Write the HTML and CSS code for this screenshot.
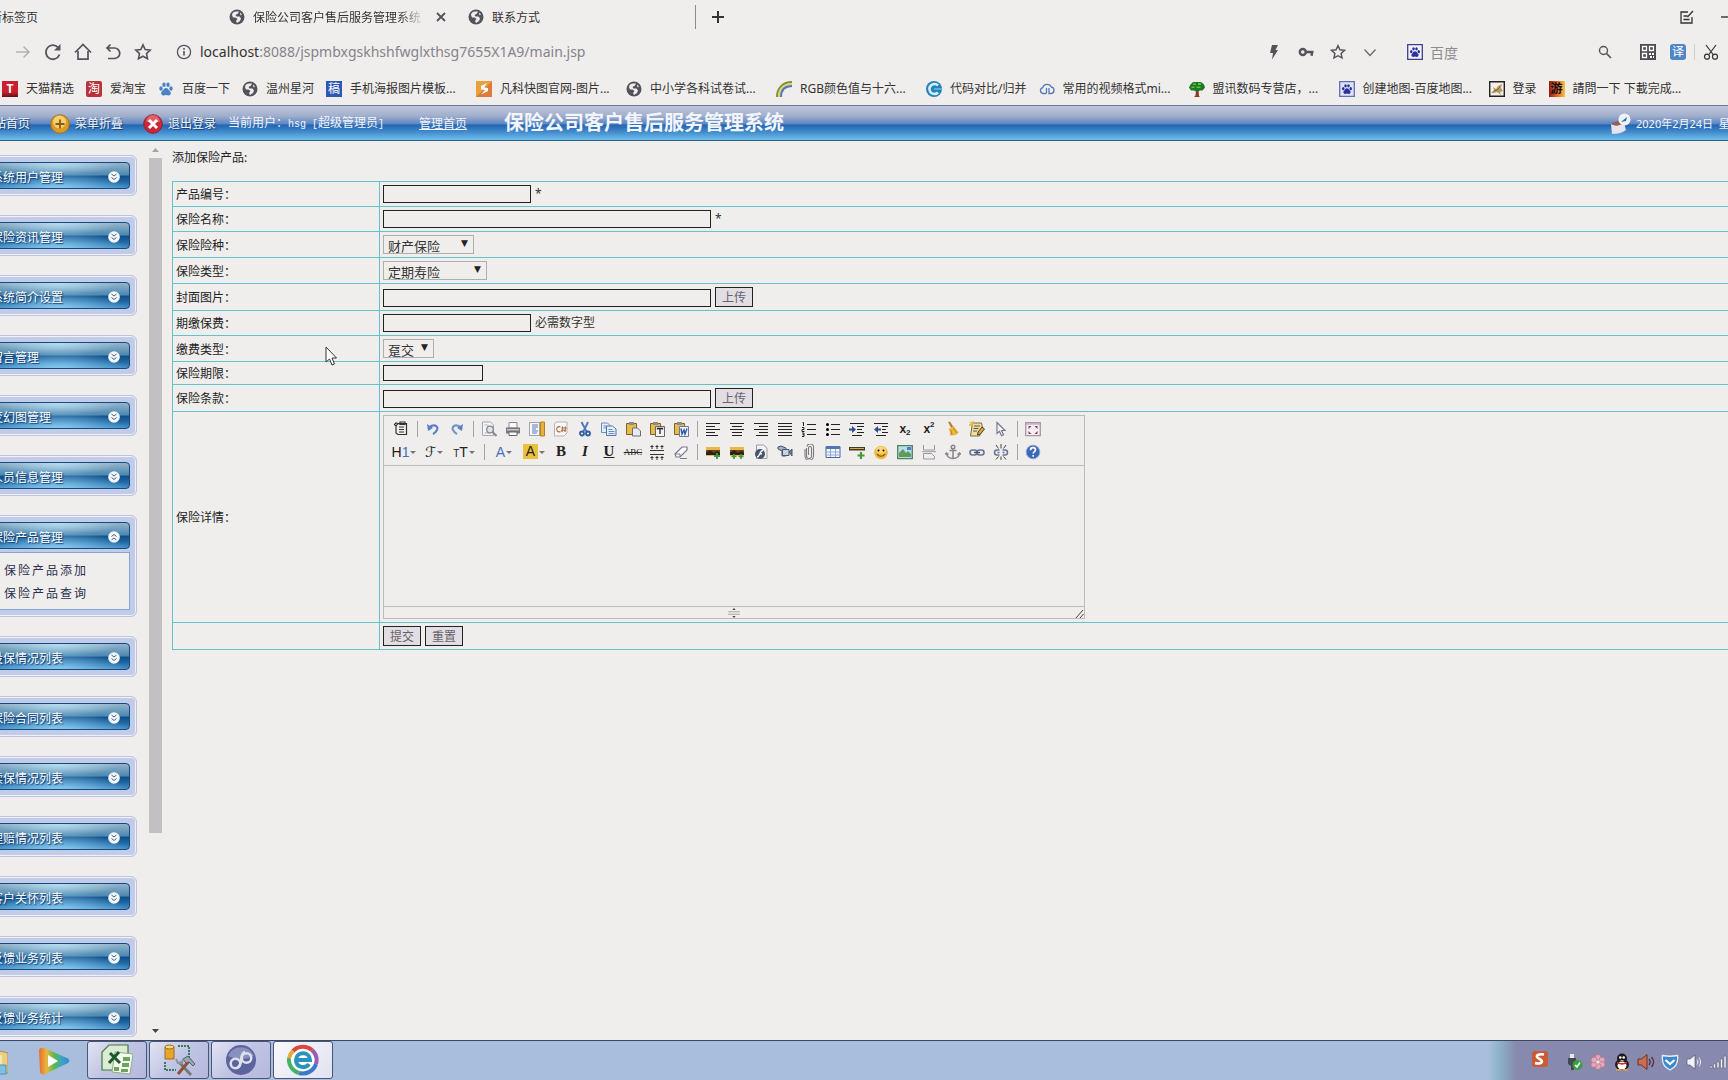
FILE: index.html
```html
<!DOCTYPE html>
<html lang="zh-CN">
  <head>
    <meta charset="UTF-8" />
    <meta name="viewport" content="width=device-width, initial-scale=1.0" />
    <title>保险公司客户售后服务管理系统</title>
    <link rel="stylesheet" href="styles.css">
  </head>
  <body>
    <!-- shared icons -->
    <svg class="defs" aria-hidden="true">
      <symbol id="globe" viewBox="0 0 16 16">
        <circle cx="8" cy="8" r="7.5" fill="#55525a" />
        <path d="M3 6c0-2 2-3.500 4-3.500h3L9 4.500 6.500 6l1 1.500h3l1.500 2-1 2.500-3 2-1-2 1.500-2-2-1.500H4z" fill="#efedee" />
        <path d="m11 3.500 2 2-1.500 1z" fill="#efedee" />
      </symbol>
      <symbol id="paw" viewBox="0 0 16 16">
        <ellipse cx="3" cy="7.500" rx="1.700" ry="2.200" />
        <ellipse cx="6" cy="3.800" rx="1.700" ry="2.300" />
        <ellipse cx="10" cy="3.800" rx="1.700" ry="2.300" />
        <ellipse cx="13" cy="7.500" rx="1.700" ry="2.200" />
        <path d="M8 7c2 0 2.500 2 4 3.300 1.700 1.600.7 4.200-1.400 4.200-1 0-1.600-.4-2.600-.4s-1.600.4-2.600.4C3.300 14.500 2.300 12 4 10.300 5.500 9 6 7 8 7z" />
      </symbol>
      <symbol id="star" viewBox="0 0 18 18">
        <path d="m9 1.800 2.200 4.700 5.100.6-3.800 3.500 1 5.100L9 13.200l-4.500 2.500 1-5.100L1.700 7.100l5.100-.6z" fill="none" stroke="#55525a" stroke-width="1.600" />
      </symbol>
      <symbol id="open" viewBox="0 0 14 14">
        <circle cx="7" cy="7" r="5.800" fill="#f4f8fc" />
        <path d="m4.500 4 2.500 2L9.500 4M4.500 7.500 7 9.500l2.500-2" fill="none" stroke="#4c5f76" />
      </symbol>
      <symbol id="close" viewBox="0 0 14 14">
        <circle cx="7" cy="7" r="5.800" fill="#f4f8fc" />
        <path d="m4.500 6.500 2.500-2 2.500 2M4.500 10 7 8l2.500 2" fill="none" stroke="#4c5f76" />
      </symbol>
      <symbol id="board" viewBox="0 0 16 16">
        <path d="M1.500 2.500h10v11h-10z" fill="#e6bb4c" stroke="#7d622c" />
        <path d="M4 1h5v3H4z" fill="#8b8b90" />
      </symbol>
      <symbol id="photo" viewBox="0 0 16 16">
        <path d="M1 3h14v9H1z" fill="#e9b848" />
        <path d="M1 6h14v5H1z" fill="#6b4322" />
        <path d="m1 9 4-3 4 3 3-2 3 2v2H1z" fill="#2e2018" />
      </symbol>
    </svg>

    <div class="tabs">
      <button class="tab tab-first">新标签页</button>
      <button class="tab tab-active">
        <svg class="i16"><use href="#globe" /></svg>
        <span class="tab-text">保险公司客户售后服务管理系统</span>
        <svg class="i16" viewBox="0 0 16 16"><path d="m4 4 8 8M12 4l-8 8" stroke="#55525a" stroke-width="1.800" /></svg>
      </button>
      <button class="tab tab-last">
        <svg class="i16"><use href="#globe" /></svg>
        <span>联系方式</span>
      </button>
      <button class="icon-button tab-new" aria-label="新建标签">
        <svg class="i16" viewBox="0 0 16 16"><path d="M8 2v12M2 8h12" stroke="#333" stroke-width="2" /></svg>
      </button>
      <div class="window-buttons">
        <button class="icon-button" aria-label="皮肤">
          <svg class="i16" viewBox="0 0 16 16"><path d="M9 3H2v11h11V8M4.500 7h4M4.500 10.500h6M8.500 8 14 2" fill="none" stroke="#333" stroke-width="1.300" /></svg>
        </button>
        <button class="icon-button" aria-label="最小化">
          <svg class="i16" viewBox="0 0 16 16"><path d="M0 8h14" stroke="#333" stroke-width="1.400" /></svg>
        </button>
      </div>
    </div>

    <div class="address">
      <div class="nav-buttons">
        <button class="icon-button" aria-label="前进">
          <svg class="i18" viewBox="0 0 18 18"><path d="M2 9h13M9.500 3.500 15 9l-5.500 5.500" fill="none" stroke="#b5b2b6" stroke-width="1.500" /></svg>
        </button>
        <button class="icon-button" aria-label="刷新">
          <svg class="i18" viewBox="0 0 18 18"><path d="M15.500 11.500A7 7 0 1 1 14.500 5" fill="none" stroke="#55525a" stroke-width="1.800" /><path d="M16.500 1v6.500H10z" fill="#55525a" /></svg>
        </button>
        <button class="icon-button" aria-label="主页">
          <svg class="i18" viewBox="0 0 18 18"><path d="m1 9.500 8-8 8 8M4 8v8.200h10V8" fill="none" stroke="#55525a" stroke-width="1.700" /></svg>
        </button>
        <button class="icon-button" aria-label="恢复">
          <svg class="i18" viewBox="0 0 18 18"><path d="M6.500 1.500 3 5l3.500 3.500M3 5h7.500a5 5 0 0 1 0 10.500H4" fill="none" stroke="#55525a" stroke-width="1.700" /></svg>
        </button>
        <button class="icon-button" aria-label="收藏"><svg class="i18"><use href="#star" /></svg></button>
      </div>
      <div class="url">
        <svg class="i16" viewBox="0 0 16 16"><circle cx="8" cy="8" r="6.600" fill="none" stroke="#55525a" stroke-width="1.300" /><path d="M8 7v4.500M8 4v1.800" stroke="#55525a" stroke-width="1.600" /></svg>
        <span><b>localhost</b>:8088/jspmbxgskhshfwglxthsg7655X1A9/main.jsp</span>
      </div>
      <div class="url-buttons">
        <button class="icon-button" aria-label="极速模式">
          <svg class="i16" viewBox="0 0 16 16"><path d="M6 1h6l-2.500 5H12l-6 9.500L7 9H4z" fill="#55525a" /></svg>
        </button>
        <button class="icon-button" aria-label="密码">
          <svg class="i16" viewBox="0 0 16 16"><circle cx="4.800" cy="8" r="3" fill="none" stroke="#55525a" stroke-width="2.400" /><path d="M7 6.800h8.500v2.400H15v2.500h-2.500V9.200H7z" fill="#55525a" /></svg>
        </button>
        <button class="icon-button" aria-label="添加收藏"><svg class="i16"><use href="#star" /></svg></button>
        <button class="icon-button" aria-label="展开">
          <svg class="i16" viewBox="0 0 16 16"><path d="m2.500 5.500 5.500 6 5.500-6" fill="none" stroke="#66636a" stroke-width="1.200" /></svg>
        </button>
      </div>
      <div class="search">
        <svg class="i16" viewBox="0 0 16 16"><path d="M.7.7h14.600v14.600H.7z" fill="#f4f2f6" stroke="#3b3f8c" stroke-width="1.300" /><g fill="#2a30a0"><use href="#paw" x="2" y="2" width="12" height="12" /></g></svg>
        <input class="search-input" type="text" aria-label="搜索" placeholder="百度" />
        <button class="icon-button" aria-label="搜索">
          <svg class="i16" viewBox="0 0 16 16"><circle cx="6.500" cy="6.500" r="4" fill="none" stroke="#55525a" stroke-width="1.400" /><path d="m9.500 9.500 4.500 4.500" stroke="#55525a" stroke-width="1.700" /></svg>
        </button>
      </div>
      <div class="tools">
        <button class="icon-button" aria-label="二维码">
          <svg class="i16" viewBox="0 0 16 16"><path d="M0 0h16v16H0z" fill="#4d4a52" /><path d="M2.500 2.500h4v4h-4zM9.500 2.500h4v4h-4zM2.500 9.500h4v4h-4z" fill="none" stroke="#fff" stroke-width="1.300" /><path d="M9 9h2v2H9zM12 9h2v2h-2zM10 12h2v2h-2zM13 12h1v2h-1z" fill="#fff" /></svg>
        </button>
        <button class="icon-button translate">译</button>
        <button class="icon-button cut" aria-label="截图">
          <svg class="i16" viewBox="0 0 16 16"><path d="m3 1 7.500 10M13 1 5.500 11" stroke="#333" stroke-width="1.200" /><circle cx="4" cy="12.700" r="2.500" fill="none" stroke="#333" stroke-width="1.200" /><circle cx="12" cy="12.700" r="2.500" fill="none" stroke="#333" stroke-width="1.200" /></svg>
        </button>
      </div>
    </div>

    <nav class="bookmarks">
      <a class="bookmark" href="#"><span class="badge badge-tmall">T</span>天猫精选</a>
      <a class="bookmark" href="#"><span class="badge badge-taobao">淘</span>爱淘宝</a>
      <a class="bookmark" href="#"><svg class="i16" fill="#4a82c4"><use href="#paw" /></svg>百度一下</a>
      <a class="bookmark" href="#"><svg class="i16"><use href="#globe" /></svg>温州星河</a>
      <a class="bookmark" href="#"><span class="badge badge-gao">稿</span><span class="bookmark-long">手机海报图片模板...</span></a>
      <a class="bookmark" href="#">
        <svg class="i16" viewBox="0 0 16 16"><path d="M0 0h16v16H0z" fill="#e8a23c" /><path d="M0 16 16 0v16z" fill="#dc7c3c" /><path d="M11 2 5 5v3.500l4 .5-4 4.500L12 10V7L8 6.500z" fill="#fff" /></svg>
        <span class="bookmark-long">凡科快图官网-图片...</span>
      </a>
      <a class="bookmark" href="#"><svg class="i16"><use href="#globe" /></svg><span class="bookmark-long">中小学各科试卷试...</span></a>
      <a class="bookmark" href="#">
        <svg class="i16" viewBox="0 0 16 16"><g fill="none" stroke-width="2"><path d="M1 16C1 7 7 1 16 1" stroke="#7d8f3c" /><path d="M3 16C3 8 8 3 16 3" stroke="#e2d264" /><path d="M5 16C5 9 9 5 16 5" stroke="#4f78b8" /></g></svg>
        <span class="bookmark-long">RGB颜色值与十六...</span>
      </a>
      <a class="bookmark" href="#">
        <svg class="i16" viewBox="0 0 16 16"><circle cx="8" cy="8" r="8" fill="#2583b8" /><path d="M12 4.500A5 5 0 1 0 12 11.500" fill="none" stroke="#d6eefa" stroke-width="2.600" /><path d="M8 7h8v2H8z" fill="#4db4de" /></svg>
        代码对比/归并
      </a>
      <a class="bookmark" href="#">
        <svg class="i16" viewBox="0 0 16 16"><path d="M7 12.500H4.500a3 3 0 0 1-.8-5.900A4.600 4.600 0 0 1 12.300 6a3.300 3.300 0 0 1 0 6.500H10V7M7.500 7v5.500" fill="none" stroke="#5479b8" stroke-width="1.300" /></svg>
        <span class="bookmark-long">常用的视频格式mi...</span>
      </a>
      <a class="bookmark" href="#">
        <svg class="i16" viewBox="0 0 16 16"><path d="M7 9h2.500l.5 6 1 1H5l1.500-1.500z" fill="#8c3b20" /><path d="M4 1h8l3 2.500 1 3-2.500 3H11L8 11 5 9.500H2L0 6.500l1.500-3z" fill="#1c7a20" /><path d="M4 2.500h3v1.500H4zM9 2h3v2H9zM2.500 5.500h3v1.500h-3zM7.500 5.500h4V7h-4z" fill="#58c04c" /></svg>
        <span class="bookmark-long">盟讯数码专营店，...</span>
      </a>
      <a class="bookmark" href="#">
        <svg class="i16" viewBox="0 0 16 16"><path d="M.7.7h14.600v14.600H.7z" fill="#dfe3f4" stroke="#5f70b4" stroke-width="1.300" /><g fill="#2a30a0"><use href="#paw" x="2" y="2" width="12" height="12" /></g></svg>
        <span class="bookmark-long">创建地图-百度地图...</span>
      </a>
      <a class="bookmark" href="#">
        <svg class="i16" viewBox="0 0 16 16"><path d="M.7.7h14.600v14.600H.7z" fill="#f3efe6" stroke="#222" stroke-width="1.400" /><path d="m2 12 3-3-1-3 3 2 2-3 4-2-1 4 2 3-3 1 1 3-4-3-3 1z" fill="#b59a62" /><path d="m5 10 3-1 3-3" fill="none" stroke="#7c6434" /></svg>
        登录
      </a>
      <a class="bookmark" href="#"><span class="badge badge-game">游</span>請問一下 下載完成...</a>
    </nav>

    <header class="topbar">
      <div class="topbar-left">
        <a class="top-link" href="#">网站首页</a>
        <a class="top-link" href="#">
          <svg class="i20" viewBox="0 0 20 20"><circle cx="10" cy="10" r="9.300" fill="#dc9a28" stroke="#a5711f" /><circle cx="9.500" cy="8" r="6.500" fill="#f4cf6a" /><path d="M10 5.500v9M5.500 10h9" stroke="#8a5a18" stroke-width="1.800" /></svg>
          菜单折叠
        </a>
        <a class="top-link" href="#">
          <svg class="i20" viewBox="0 0 20 20"><circle cx="10" cy="10" r="9.300" fill="#c8283a" stroke="#94202c" /><path d="M3 8a7 7 0 0 1 14 0z" fill="#e0606c" /><path d="m6 6 8 8M14 6l-8 8" stroke="#fff" stroke-width="3" /></svg>
          退出登录
        </a>
        <span class="user">当前用户：<span class="mono">hsg [</span>超级管理员<span class="mono">]</span></span>
        <a class="home-link" href="#">管理首页</a>
      </div>
      <h1 class="title">保险公司客户售后服务管理系统</h1>
      <div class="date">
        <svg class="i22" viewBox="0 0 22 22"><path d="M2 11c3 2 8 2 13-1l2 7c-4 3-9 4-14 4z" fill="#e6e3ea" /><path d="m2 11 6-3 7 2c-4 3-9 3-13 1z" fill="#a05a4c" /><circle cx="15.500" cy="6.500" r="6" fill="#eef2f8" /><path d="m12 9 6-5-1 4z" fill="#2c6f8c" /></svg>
        <span>2020年2月24日&nbsp; 星期一</span>
      </div>
    </header>

    <div class="page">
      <nav class="sidebar">
        <div class="menu"><button class="menu-button">系统用户管理<svg class="i14"><use href="#open" /></svg></button></div>
        <div class="menu"><button class="menu-button">保险资讯管理<svg class="i14"><use href="#open" /></svg></button></div>
        <div class="menu"><button class="menu-button">系统简介设置<svg class="i14"><use href="#open" /></svg></button></div>
        <div class="menu"><button class="menu-button">留言管理<svg class="i14"><use href="#open" /></svg></button></div>
        <div class="menu"><button class="menu-button">变幻图管理<svg class="i14"><use href="#open" /></svg></button></div>
        <div class="menu"><button class="menu-button">人员信息管理<svg class="i14"><use href="#open" /></svg></button></div>
        <div class="menu">
          <button class="menu-button">保险产品管理<svg class="i14"><use href="#close" /></svg></button>
          <div class="submenu">
            <a href="#">保险产品添加</a>
            <a href="#">保险产品查询</a>
          </div>
        </div>
        <div class="menu"><button class="menu-button">投保情况列表<svg class="i14"><use href="#open" /></svg></button></div>
        <div class="menu"><button class="menu-button">保险合同列表<svg class="i14"><use href="#open" /></svg></button></div>
        <div class="menu"><button class="menu-button">续保情况列表<svg class="i14"><use href="#open" /></svg></button></div>
        <div class="menu"><button class="menu-button">理赔情况列表<svg class="i14"><use href="#open" /></svg></button></div>
        <div class="menu"><button class="menu-button">客户关怀列表<svg class="i14"><use href="#open" /></svg></button></div>
        <div class="menu"><button class="menu-button">反馈业务列表<svg class="i14"><use href="#open" /></svg></button></div>
        <div class="menu"><button class="menu-button">反馈业务统计<svg class="i14"><use href="#open" /></svg></button></div>
      </nav>

      <div class="scrollbar">
        <svg class="scroll-arrow" viewBox="0 0 13 17"><path d="m3 11 3.500-4 3.500 4z" fill="#a5a2a6" /></svg>
        <div class="scroll-track"><div class="scroll-thumb"></div></div>
        <svg class="scroll-arrow" viewBox="0 0 13 17"><path d="m3 6 3.500 4L10 6z" fill="#444" /></svg>
      </div>

      <main class="content">
        <p class="caption">添加保险产品:</p>
        <form>
          <table class="form">
            <tr>
              <th><label for="bianhao">产品编号：</label></th>
              <td><div class="field"><input class="text text-short" id="bianhao" type="text" /><span>*</span></div></td>
            </tr>
            <tr>
              <th><label for="mingcheng">保险名称：</label></th>
              <td><div class="field"><input class="text text-long" id="mingcheng" type="text" /><span>*</span></div></td>
            </tr>
            <tr>
              <th><label for="xianzhong">保险险种：</label></th>
              <td><div class="field"><div class="select select-m"><select id="xianzhong"><option>财产保险</option></select></div></div></td>
            </tr>
            <tr>
              <th><label for="leixing">保险类型：</label></th>
              <td><div class="field"><div class="select select-l"><select id="leixing"><option>定期寿险</option></select></div></div></td>
            </tr>
            <tr>
              <th><label for="tupian">封面图片：</label></th>
              <td><div class="field"><input class="text text-long" id="tupian" type="text" /><button class="btn" type="button">上传</button></div></td>
            </tr>
            <tr>
              <th><label for="baofei">期缴保费：</label></th>
              <td><div class="field"><input class="text text-short" id="baofei" type="text" /><span>必需数字型</span></div></td>
            </tr>
            <tr>
              <th><label for="jiaofei">缴费类型：</label></th>
              <td><div class="field"><div class="select select-s"><select id="jiaofei"><option>趸交</option></select></div></div></td>
            </tr>
            <tr>
              <th><label for="qixian">保险期限：</label></th>
              <td><div class="field"><input class="text text-mini" id="qixian" type="text" /></div></td>
            </tr>
            <tr>
              <th><label for="tiaokuan">保险条款：</label></th>
              <td><div class="field"><input class="text text-long" id="tiaokuan" type="text" /><button class="btn" type="button">上传</button></div></td>
            </tr>
            <tr>
              <th><label for="xiangqing">保险详情：</label></th>
              <td>
                <div class="editor">
                  <div class="toolbar">
                    <div class="toolbar-row">
                      <button class="tool" type="button" aria-label="HTML代码"><svg class="i16" viewBox="0 0 16 16"><path d="M5 2.500h8.500v11H5L3 12V5zM3 5 1.500 3.500 3 2l4 1M7 1h5v2.500H7zM6 6h5M6 8.500h5M6 11h5" fill="none" stroke="#333" stroke-width="1.200" /></svg></button>
                      <span class="separator"></span>
                      <button class="tool" type="button" aria-label="后退"><svg class="i16" viewBox="0 0 16 16"><path d="M4 7c4-5 10-2 8 2-.8 1.500-2 3-4 4" fill="none" stroke="#5b7fc0" stroke-width="2.200" /><path d="m2 3 1 7 5-3z" fill="#5b7fc0" /></svg></button>
                      <button class="tool" type="button" aria-label="前进"><svg class="i16" viewBox="0 0 16 16"><path d="M12 7C8 2 2 5 4 9c.8 1.500 2 3 4 4" fill="none" stroke="#7096c4" stroke-width="2.200" /><path d="m14 3-1 7-5-3z" fill="#5b7fc0" /></svg></button>
                      <span class="separator"></span>
                      <button class="tool" type="button" aria-label="预览"><svg class="i16" viewBox="0 0 16 16"><path d="M1.500 1h8l3 3v10.500h-11z" fill="#f6f6f8" stroke="#a5a5aa" /><path d="M3.500 4h4M3.500 12h5" stroke="#b5b5ba" /><circle cx="9" cy="8.500" r="3.300" fill="#dde6ee" stroke="#88888e" stroke-width="1.300" /><path d="m11.500 11 4 4" stroke="#88888e" stroke-width="2" /></svg></button>
                      <button class="tool" type="button" aria-label="打印"><svg class="i16" viewBox="0 0 16 16"><path d="M4 1.500h8V7H4z" fill="#fafafa" stroke="#88888c" /><path d="M1 6.500h14v6H1z" fill="#77777c" /><path d="M2 8h12v1.500H2z" fill="#c5c5ca" /><path d="M4 11h8v3.500H4z" fill="#fff" stroke="#66666a" /></svg></button>
                      <button class="tool" type="button" aria-label="模板"><svg class="i16" viewBox="0 0 16 16"><path d="M.5 1.500h10v13H.5z" fill="#f8f8fb" stroke="#55555c" stroke-dasharray="1 1" /><path d="M3 4h6M3 6h6M3 8h4M3 10h6M3 12h5" stroke="#5a78b0" /><path d="M11.500 1h4v14h-4z" fill="#e8b33c" stroke="#b58020" /></svg></button>
                      <button class="tool" type="button" aria-label="程序代码"><svg class="i16" viewBox="0 0 16 16"><path d="M3 1h11v11l-3 3H1.500V3z" fill="#fbf8f5" stroke="#b8b2ae" /><path d="M7.500 6A2.600 2.600 0 1 0 7.500 10.500M9.500 5.500 9 11M12.500 5.500 12 11M8.500 7h5M8 9.300h5" fill="none" stroke="#a86848" stroke-width="1.100" /></svg></button>
                      <button class="tool" type="button" aria-label="剪切"><svg class="i16" viewBox="0 0 16 16"><path d="m4.500 1 5 9.500M11 1 6.500 10.500" stroke="#5479b4" stroke-width="1.900" /><circle cx="5" cy="12.500" r="2" fill="none" stroke="#2f5ba0" stroke-width="1.800" /><circle cx="11" cy="12.500" r="2" fill="none" stroke="#2f5ba0" stroke-width="1.800" /></svg></button>
                      <button class="tool" type="button" aria-label="复制"><svg class="i16" viewBox="0 0 16 16"><path d="M.5 2h6l3 3v6.500h-9z" fill="#e6effa" stroke="#6c8cbc" /><path d="M5.500 5h6l3.500 3v6.500H5.500z" fill="#e6effa" stroke="#4e74b0" /><path d="M7.500 8.500h4M7.500 10.500h6M7.500 12.500h6M2.500 5h3M2.500 7h2.500" stroke="#6c8cbc" /></svg></button>
                      <button class="tool" type="button" aria-label="粘贴"><svg class="i16" viewBox="0 0 16 16"><use href="#board" /><path d="M7.500 7h5l3 3v5h-8z" fill="#e8ecf2" stroke="#666c78" /></svg></button>
                      <button class="tool" type="button" aria-label="粘贴为无格式文本"><svg class="i16" viewBox="0 0 16 16"><use href="#board" /><path d="M6.500 5.500h9v10h-9z" fill="#f4f4f6" stroke="#666" /><path d="M8.500 8.500v-1h5v1M11 7.500V13" fill="none" stroke="#222" stroke-width="1.300" /></svg></button>
                      <button class="tool" type="button" aria-label="从Word粘贴"><svg class="i16" viewBox="0 0 16 16"><use href="#board" /><path d="M6.500 5.500h9v10h-9z" fill="#eef3fa" stroke="#667ba0" /><path d="m8 7.500 1 5.500 2-4 1 4 2-5.500" fill="none" stroke="#2f55a5" stroke-width="1.400" /></svg></button>
                      <span class="separator"></span>
                      <button class="tool" type="button" aria-label="左对齐"><svg class="i16" viewBox="0 0 16 16"><path d="M1 2.500h14M1 5.500h9M1 8.500h14M1 11.500h9M1 14.500h12" stroke="#222" /></svg></button>
                      <button class="tool" type="button" aria-label="居中"><svg class="i16" viewBox="0 0 16 16"><path d="M1 2.500h14M3 5.500h10M1 8.500h14M3 11.500h10M3 14.500h10" stroke="#222" /></svg></button>
                      <button class="tool" type="button" aria-label="右对齐"><svg class="i16" viewBox="0 0 16 16"><path d="M1 2.500h14M6 5.500h9M1 8.500h14M6 11.500h9M3 14.500h12" stroke="#222" /></svg></button>
                      <button class="tool" type="button" aria-label="两端对齐"><svg class="i16" viewBox="0 0 16 16"><path d="M1 2.500h14M1 5.500h14M1 8.500h14M1 11.500h14M1 14.500h14" stroke="#222" /></svg></button>
                      <button class="tool" type="button" aria-label="编号"><svg class="i16" viewBox="0 0 16 16"><path d="M6 3.500h9M6 8.500h9M6 13.500h9M1.500 1.500h1V5M1 6.500h2v2H1v2h2.500M1 12h2v3.500H1M1.500 13.700H3" fill="none" stroke="#222" /></svg></button>
                      <button class="tool" type="button" aria-label="项目符号"><svg class="i16" viewBox="0 0 16 16"><path d="M6 3.500h9M6 8.500h9M6 13.500h9" stroke="#222" /><circle cx="2.500" cy="3.500" r="1.500" /><circle cx="2.500" cy="8.500" r="1.500" /><circle cx="2.500" cy="13.500" r="1.500" /></svg></button>
                      <button class="tool" type="button" aria-label="增加缩进"><svg class="i16" viewBox="0 0 16 16"><path d="M1 2.500h14M8 5.500h7M8 8.500h5M8 11.500h7M3 14.500h10" stroke="#222" /><path d="M0 7.500h3V5l4 3.500L3 12V9.500H0z" fill="#2d4f88" /></svg></button>
                      <button class="tool" type="button" aria-label="减少缩进"><svg class="i16" viewBox="0 0 16 16"><path d="M1 2.500h14M9 5.500h6M9 8.500h4M9 11.500h6M3 14.500h10" stroke="#222" /><path d="M8 7.500H5V5L1 8.500 5 12V9.500h3z" fill="#2d4f88" /></svg></button>
                      <button class="tool tool-sub" type="button">x<sub>2</sub></button>
                      <button class="tool tool-sub" type="button">x<sup>2</sup></button>
                      <button class="tool" type="button" aria-label="清理"><svg class="i16" viewBox="0 0 16 16"><path d="m3 1 2-.5L8.500 6l-2 1.500z" fill="#b87a3c" /><path d="m3.500 8 5-3 5 6c0 2-4 4-9 3.500 1-2 .5-4-1-6.500z" fill="#eab840" /><path d="m6 9 1 5M8 7l4 5" stroke="#b8862c" /></svg></button>
                      <button class="tool" type="button" aria-label="一键排版"><svg class="i16" viewBox="0 0 16 16"><path d="M3.500 2h9l1 5-3 8h-9z" fill="#f2dfa0" stroke="#7a6a3c" /><path d="M5 5h6M4.500 7.500h5M4 10h4" stroke="#555" /><path d="m9 11 4-5 2.500 2-4 5-3 1z" fill="#e0a030" stroke="#444" /><path d="m1 1 3 3M4 0v3M0 4h3" stroke="#e8b43c" stroke-width="1.500" /></svg></button>
                      <button class="tool" type="button" aria-label="全选"><svg class="i16" viewBox="0 0 16 16"><path d="M4 1.500v11l2.500-2.200 2 4.500 2-1-2-4.300H12z" fill="#fbfbff" stroke="#77778a" stroke-width="1.200" /></svg></button>
                      <span class="separator"></span>
                      <button class="tool" type="button" aria-label="全屏显示"><svg class="i16" viewBox="0 0 16 16"><path d="M.7 1.700h14.600v13H.7z" fill="#f6eef2" stroke="#a595a5" stroke-width="1.300" /><path d="M.7 3h14.600" stroke="#a595a5" /><path d="M3.500 5h3L3.500 8zM12.500 5h-3l3 3zM3.500 13v-3l3 3zM12.500 13h-3l3-3z" fill="#903c4a" /></svg></button>
                    </div>
                    <div class="toolbar-row">
                      <button class="tool tool-drop" type="button"><span>H<i class="blue">1</i></span></button>
                      <button class="tool tool-drop tool-font" type="button">ℱ</button>
                      <button class="tool tool-drop" type="button"><span><small>T</small>T</span></button>
                      <span class="separator separator-wide"></span>
                      <button class="tool tool-drop" type="button"><span class="blue">A</span></button>
                      <button class="tool tool-drop" type="button"><span class="marker">A</span></button>
                      <button class="tool tool-serif" type="button"><b>B</b></button>
                      <button class="tool tool-serif" type="button"><em>I</em></button>
                      <button class="tool tool-serif" type="button"><u>U</u></button>
                      <button class="tool tool-strike" type="button"><s>ABC</s></button>
                      <button class="tool" type="button" aria-label="行距"><svg class="i16" viewBox="0 0 16 16"><path d="M1 6.500h14M1 10.500h14" stroke="#333" /><path d="M3 1v4M1.500 2.500h3M8 1v4M6.500 2.500h3M13 1v4M11.500 2.500h3M3 12v4M1.500 13.500h3M8 12v4M6.500 13.500h3M13 12v4M11.500 13.500h3" stroke="#333" /></svg></button>
                      <button class="tool" type="button" aria-label="删除格式"><svg class="i16" viewBox="0 0 16 16"><path d="m2 10 7-7h5v3l-7 7H3z" fill="#fafafd" stroke="#7b7b90" stroke-width="1.200" /><path d="m2 10 5 0 0 3M7 14.500h7" fill="none" stroke="#7b7b90" /></svg></button>
                      <span class="separator"></span>
                      <button class="tool" type="button" aria-label="图片"><svg class="i16" viewBox="0 0 16 16"><use href="#photo" /><path d="M12 9v6M9 12h6" stroke="#3f9a3c" stroke-width="2" /></svg></button>
                      <button class="tool" type="button" aria-label="批量图片上传"><svg class="i16" viewBox="0 0 16 16"><use href="#photo" /><path d="M5 10v5M2.500 12.500h5M12 10v5M9.500 12.500h5" stroke="#3f9a3c" stroke-width="1.700" /></svg></button>
                      <button class="tool" type="button" aria-label="Flash"><svg class="i16" viewBox="0 0 16 16"><path d="M3.500 1h7l3.500 3v10.500H3.500z" fill="#f2f2f6" stroke="#9a9aa2" /><circle cx="7" cy="10" r="5" fill="#46566e" /><path d="M10 6.500c-2.500 0-2.500 2-3.200 3.500S5.500 13 4 13M6.500 9.800H9" fill="none" stroke="#fff" stroke-width="1.400" /></svg></button>
                      <button class="tool" type="button" aria-label="视音频"><svg class="i16" viewBox="0 0 16 16"><path d="m1 3 3-1 5 2v8H5V7L1 5z" fill="#a5b0c2" stroke="#48566c" /><path d="M5.500 5.500H12v6H5.500z" fill="#c8d2e0" stroke="#48566c" /><path d="m12 8 3-3v7z" fill="#68809f" stroke="#48566c" /></svg></button>
                      <button class="tool" type="button" aria-label="插入文件"><svg class="i16" viewBox="0 0 16 16"><path d="M5.500 4v8a2.500 2.500 0 0 0 5 0V4a1.500 1.500 0 0 0-3 0v7M4 5v7a4 4 0 0 0 8.500 0V4A3 3 0 0 0 6 2.500" fill="none" stroke="#7b7b80" stroke-width="1.100" /></svg></button>
                      <button class="tool" type="button" aria-label="表格"><svg class="i16" viewBox="0 0 16 16"><path d="M1 2.500h14v11H1z" fill="#f5f8fd" stroke="#4568a5" /><path d="M1 2h14v3H1z" fill="#4f77b8" /><path d="M1 8h14M1 11h14M5.500 5v8M10.500 5v8" stroke="#8fa8d0" /></svg></button>
                      <button class="tool" type="button" aria-label="插入横线"><svg class="i16" viewBox="0 0 16 16"><path d="M0 3h16v3.500H0z" fill="#443a24" /><path d="M1 4h14v1H1z" fill="#d2a848" /><path d="M12 8v7M8.500 11.500h7" stroke="#3f9a3c" stroke-width="2.200" /></svg></button>
                      <button class="tool" type="button" aria-label="插入表情"><svg class="i16" viewBox="0 0 16 16"><circle cx="8" cy="8.500" r="6.800" fill="#f0b83c" /><ellipse cx="8" cy="6" rx="5" ry="3.500" fill="#f8d878" /><circle cx="5.500" cy="6.500" r="1" /><circle cx="10.500" cy="6.500" r="1" /><path d="M4 10c2 3 6 3 8 0" fill="none" stroke="#7b4a14" stroke-width="1.200" /></svg></button>
                      <button class="tool" type="button" aria-label="百度地图"><svg class="i16" viewBox="0 0 16 16"><path d="M.7 1.700h14.600v13H.7z" fill="#b8dcf0" stroke="#4f8060" stroke-width="1.300" /><path d="M2 13V9l4-4 3 4 2-2 3 3v3z" fill="#5f9c50" /><path d="M10 3h4v3h-4z" fill="#4d80c0" /></svg></button>
                      <button class="tool" type="button" aria-label="分页符"><svg class="i16" viewBox="0 0 16 16"><path d="M2.500 1v5h11V1M2.500 15V9.500h8l3 3V15zM1 7.700h14" fill="none" stroke="#9a9aa0" /></svg></button>
                      <button class="tool" type="button" aria-label="锚点"><svg class="i16" viewBox="0 0 16 16"><path d="M8 5v9.500M4.500 6.500h7M1.500 9c.5 4 3 5.500 6.500 5.500S14 13 14.500 9M0 10.500 1.500 9l2 1.500M12.500 10.500l2-1.500 1.500 1.500" fill="none" stroke="#85858a" stroke-width="1.500" /><circle cx="8" cy="3" r="1.800" fill="none" stroke="#85858a" stroke-width="1.400" /></svg></button>
                      <button class="tool" type="button" aria-label="超级链接"><svg class="i16" viewBox="0 0 16 16"><rect x="1" y="6" width="7" height="5" rx="2.500" fill="none" stroke="#667494" stroke-width="1.600" /><rect x="8" y="6" width="7" height="5" rx="2.500" fill="none" stroke="#667494" stroke-width="1.600" /><path d="M5 8.500h6" stroke="#4a5878" stroke-width="1.500" /></svg></button>
                      <button class="tool" type="button" aria-label="取消超级链接"><svg class="i16" viewBox="0 0 16 16"><path d="M6.500 6H4a2.500 2.500 0 0 0 0 5h2.500M9.500 6H12a2.500 2.500 0 0 1 0 5H9.500M4.500 8.500h2M9.500 8.500h2" fill="none" stroke="#667494" stroke-width="1.500" /><path d="M8 0v4.500M3 1l2.500 3.500M13 1l-2.500 3.500M8 12.500V16M3 15.500 5.500 12.500M13 15.500l-2.500-3" stroke="#444" /></svg></button>
                      <span class="separator"></span>
                      <button class="tool" type="button" aria-label="关于"><svg class="i16" viewBox="0 0 16 16"><circle cx="8" cy="8" r="6.800" fill="#3a68b8" stroke="#88a5d4" /><path d="M5.500 6.200c0-3.500 5-3.200 5-.3 0 1.800-2.300 1.700-2.300 3.500M8.200 11v1.800" fill="none" stroke="#fff" stroke-width="1.700" /></svg></button>
                    </div>
                  </div>
                  <textarea class="editor-body" id="xiangqing"></textarea>
                  <div class="editor-status">
                    <svg class="i14" viewBox="0 0 14 12"><path d="M7 0 9 2.500H5zM7 12 5 9.500h4z" fill="#444" /><path d="M0 4.500h14M0 7.500h14" stroke="#999" /></svg>
                    <svg class="grip" viewBox="0 0 9 9"><path d="M1 9 8 1M5 9l3.500-4" stroke="#444" /></svg>
                  </div>
                </div>
              </td>
            </tr>
            <tr>
              <th></th>
              <td><div class="field"><button class="btn" type="submit">提交</button><button class="btn" type="reset">重置</button></div></td>
            </tr>
          </table>
        </form>
      </main>
    </div>

    <footer class="taskbar">
      <button class="task task-folder" aria-label="文件夹">
        <svg class="i32" viewBox="0 0 32 32"><path d="M4 6h20l8 2v20H4z" fill="#e8cf84" stroke="#a98f4c" /><path d="M6 10h20v18H6z" fill="#f6e6ac" /><path d="M12 20h18v9H12z" fill="#7cc0e6" stroke="#4a90c0" /></svg>
      </button>
      <button class="task task-player" aria-label="播放器">
        <svg class="i32" viewBox="0 0 32 32">
          <defs>
            <linearGradient id="play" x1="0" x2="1"><stop offset="0" stop-color="#ea6a34" /><stop offset=".25" stop-color="#e8b83c" /><stop offset=".5" stop-color="#5cb848" /><stop offset=".75" stop-color="#3ca4c8" /><stop offset="1" stop-color="#3c84d0" /></linearGradient>
          </defs>
          <path d="M1 6c0-3 2-4 5-3l23 10c3 1.500 3 4 0 5.500L7 29c-3 1.500-5 0-5-3z" fill="url(#play)" />
          <path d="M10 10v12l10-6z" fill="#fff" />
        </svg>
      </button>
      <button class="task task-window" aria-label="Excel">
        <svg class="i32" viewBox="0 0 32 32"><path d="M8 1h19v25H1V8z" fill="#dcebd4" stroke="#3c7a3c" stroke-width="1.200" /><path d="m14 8 18 2-3 20-18-2z" fill="#f4faf0" stroke="#88b080" /><path d="M22 13h7v4h-7zM21 19h7v4h-7zM20 25h7v3h-7zM13 23h5v4h-5z" fill="#6fa25c" /><path d="m9 9 10 10M18 8 8 19" stroke="#1f5a2c" stroke-width="3" /></svg>
      </button>
      <button class="task task-window" aria-label="配置工具">
        <svg class="i32" viewBox="0 0 32 32"><path d="M2 3h9v12H2z" fill="#e8a52c" stroke="#9c6c1c" /><ellipse cx="6.500" cy="3" rx="4.500" ry="2" fill="#f8d878" stroke="#9c6c1c" /><path d="M15 2h11v12M2 18v8h11" fill="none" stroke="#3c7a5c" stroke-width="2" stroke-dasharray="2 1" /><path d="m16 18 12 13" stroke="#77777c" stroke-width="3" /><path d="m15 30 11-13" stroke="#8c5434" stroke-width="3" /><path d="m20 15 5-3 7 8-2 2-4-4-3 1z" fill="#9ca5b2" stroke="#555d68" /><path d="m13 15 2 4 4 0 1-4" fill="none" stroke="#8a929c" stroke-width="2" /></svg>
      </button>
      <button class="task task-window" aria-label="开发工具">
        <svg class="i32" viewBox="0 0 32 32"><circle cx="16" cy="16" r="15" fill="#5c639e" /><path d="M3 12a14 14 0 0 1 26 0c-8 4-18 4-26 0z" fill="#8890be" /><g fill="none" stroke="#dfe0ee" stroke-width="2.500"><circle cx="10.500" cy="19.500" r="4.800" /><circle cx="21.500" cy="14" r="4.800" /><path d="M15 20c2-3 0-11 5-12M17 13c-1 5-1 9-5 11" /></g></svg>
      </button>
      <button class="task task-window task-current" aria-label="浏览器">
        <svg class="i32" viewBox="0 0 32 32"><circle cx="16" cy="16" r="12" fill="#fff" /><g fill="none" stroke-width="4"><path d="M6 7A14 14 0 0 1 25 6" stroke="#d8483c" /><path d="M25 6a14 14 0 0 1 4 14" stroke="#9a5cb0" /><path d="M29 20a14 14 0 0 1-17 9" stroke="#3c78c8" /><path d="M12 29A14 14 0 0 1 2 14" stroke="#48b064" /><path d="M2 14a14 14 0 0 1 4-7" stroke="#e8a83c" /></g><path d="M9 16h14c0-9-14-9-14 0 0 8 10 9 13 4" fill="none" stroke="#2c94bc" stroke-width="4" /></svg>
      </button>

      <div class="tray">
        <svg class="i18 tray-first" viewBox="0 0 18 18"><rect x="1" y="1" width="16" height="16" rx="3" fill="#cc5a34" /><path d="M13 4.500C7 3.500 4 6 7 8s5 3 3.500 4.500S6 13.500 4 13" fill="none" stroke="#fff" stroke-width="2.600" /></svg>
        <svg class="i18" viewBox="0 0 18 18"><path d="M5 1h4v4H5z" fill="#e8eaf0" /><path d="M3 5h8v6l-2 2v4H6v-4l-3-2z" fill="#444852" /><circle cx="12.500" cy="12" r="5" fill="#36a03c" /><path d="m10 12 2 2 3-4.500" fill="none" stroke="#fff" stroke-width="1.600" /></svg>
        <svg class="i18" viewBox="0 0 18 18"><g fill="#e0a8b8" stroke="#b87088" stroke-width=".7"><circle cx="9" cy="4.500" r="3" /><circle cx="13" cy="7" r="3" /><circle cx="13" cy="11.500" r="3" /><circle cx="9" cy="13.500" r="3" /><circle cx="5" cy="11.500" r="3" /><circle cx="5" cy="7" r="3" /></g><circle cx="9" cy="9" r="1.800" fill="#f8dce4" /></svg>
        <svg class="i18" viewBox="0 0 18 18"><ellipse cx="9" cy="11.500" rx="7" ry="5.500" fill="#1c1a20" /><circle cx="9" cy="5.500" r="5" fill="#1c1a20" /><ellipse cx="9" cy="12.500" rx="4.500" ry="4" fill="#fff" /><circle cx="7.300" cy="4.500" r="1.300" fill="#fff" /><circle cx="10.700" cy="4.500" r="1.300" fill="#fff" /><path d="M6.500 7h5L9 8.500z" fill="#eca030" /><path d="M4 8.500c3 2 7 2 10 0v2c-3 1.500-7 1.500-10 0z" fill="#cc2c34" /><path d="M3 16h5v1.500H3zM10 16h5v1.500h-5z" fill="#eca030" /></svg>
        <svg class="i18" viewBox="0 0 18 18"><path d="M1 6h3.500L10 1.500v15L4.500 12H1z" fill="#cc6c50" stroke="#6c3024" /><path d="M12 6c1.500 2 1.500 4 0 6M14.500 4c2.500 3 2.500 7 0 10" fill="none" stroke="#5c3030" stroke-width="1.300" /></svg>
        <svg class="i18" viewBox="0 0 18 18"><path d="M1.500 2.500c5 1 10 1 15 0 1 7-2 12-7.500 14.500C3.500 14.500.5 9.500 1.500 2.500z" fill="#3c88cc" stroke="#e4f0fa" stroke-width="1.300" /><path d="m4.500 7 4.500 4 4.500-4" fill="none" stroke="#fff" stroke-width="2.200" /></svg>
        <svg class="i18" viewBox="0 0 18 18"><path d="M2 6h3l5-4v14l-5-4H2z" fill="#f4f4f8" stroke="#555870" stroke-width=".7" /><path d="M12 6.500c1.300 1.500 1.300 3.500 0 5M14 4.500c2 3 2 6 0 9" fill="none" stroke="#f4f4f8" /></svg>
        <svg class="i18" viewBox="0 0 18 18"><path d="M1 13h2v2H1zM4.500 11h2v4h-2zM8 9h2v6H8zM11.500 6h2v9h-2zM15 3h2v12h-2z" fill="#f4f4f8" stroke="#555870" stroke-width=".5" /></svg>
      </div>
    </footer>

    <svg class="pointer" viewBox="0 0 12 20" aria-hidden="true"><path d="M1 1v15l3.500-3 2.500 6 2.500-1L7 12h4.500z" fill="#fff" stroke="#333" /></svg>
  </body>
</html>
```
FILE: styles.css
```css
* {
  box-sizing: border-box;
}
body {
  background-color: #f0eeed;
  color: #333;
  margin: 0;
  height: 100vh;
  display: flex;
  flex-direction: column;
  overflow: hidden;
  font-family: "Noto Sans", "Noto Sans CJK SC", sans-serif;
  font-size: 12px;
  line-height: 18px;
}
a {
  color: inherit;
  text-decoration: none;
}
button,
input,
select,
textarea {
  font-family: inherit;
  font-size: 12px;
  color: inherit;
  margin: 0;
  padding: 0;
}
button {
  background: none;
  border: none;
  cursor: pointer;
}
svg {
  display: block;
  flex: none;
}
.defs {
  position: absolute;
  width: 0;
  height: 0;
}
.i14 {
  width: 14px;
  height: 14px;
}
.i16 {
  width: 16px;
  height: 16px;
}
.i18 {
  width: 18px;
  height: 18px;
}
.i20 {
  width: 20px;
  height: 20px;
}
.i22 {
  width: 22px;
  height: 22px;
}
.i32 {
  width: 32px;
  height: 32px;
}
.icon-button {
  display: flex;
  align-items: center;
  justify-content: center;
}

/* browser tabs */
.tabs {
  display: flex;
  align-items: center;
  height: 34px;
}
.tab {
  display: flex;
  align-items: center;
  gap: 8px;
  height: 24px;
  white-space: nowrap;
}
.tab-first {
  width: 239px;
  margin-left: -10px;
}
.tab-active {
  width: 239px;
}
.tab-text {
  width: 172px;
  text-align: left;
  -webkit-mask-image: linear-gradient(90deg, #000 85%, transparent);
  mask-image: linear-gradient(90deg, #000 85%, transparent);
}
.tab-last {
  width: 228px;
  border-right: 1px solid #8d8b90;
}
.tab-new {
  margin-left: 14px;
}
.window-buttons {
  display: flex;
  gap: 26px;
  margin-left: auto;
  margin-right: -9px;
}

/* address bar */
.address {
  display: flex;
  align-items: center;
  height: 36px;
}
.nav-buttons {
  display: flex;
  gap: 12px;
  padding-left: 14px;
}
.url {
  display: flex;
  align-items: center;
  gap: 8px;
  flex: 1;
  margin-left: 24px;
  color: #85838a;
  font-size: 14px;
}
.url b {
  color: #333;
  font-weight: normal;
}
.url-buttons {
  display: flex;
  gap: 16px;
}
.search {
  display: flex;
  align-items: center;
  gap: 7px;
  width: 206px;
  margin-left: 29px;
}
.search-input {
  flex: 1;
  min-width: 0;
  border: none;
  outline: none;
  background: none;
  font-size: 14px;
}
.search-input::placeholder {
  color: #8d8b90;
}
.tools {
  display: flex;
  align-items: center;
  gap: 14px;
  margin-left: 27px;
}
.translate {
  width: 16px;
  height: 16px;
  border-radius: 3px;
  background-color: #4f86c6;
  color: #fff;
  line-height: 16px;
}
.cut {
  margin-left: -6px;
  padding: 0 9px 0 8px;
  border-left: 1px solid #cfcdd0;
}

/* bookmarks */
.bookmarks {
  display: flex;
  align-items: center;
  gap: 12px;
  height: 35px;
  padding: 2px 0 0 2px;
  white-space: nowrap;
}
.bookmark {
  display: flex;
  align-items: center;
  gap: 8px;
}
.bookmark-long {
  width: 114px;
}
.badge {
  width: 16px;
  height: 16px;
  line-height: 15px;
  text-align: center;
  color: #fff;
}
.badge-tmall {
  background: linear-gradient(#c8202c 70%, #5c1218);
  font-weight: bold;
}
.badge-taobao {
  background-color: #b8323c;
  border-radius: 2px;
}
.badge-gao {
  background-color: #2c58b4;
}
.badge-game {
  background: linear-gradient(90deg, #8c1c14, #e86428, #f4c444);
  color: #111;
  font-weight: bold;
}

/* top bar */
.topbar {
  display: flex;
  flex: none;
  height: 36px;
  overflow: hidden;
  white-space: nowrap;
  color: #f2f6fc;
  border-top: 1px solid #62789a;
  border-bottom: 1px solid #2c5c8a;
  background: linear-gradient(#c0c5da, #a2b0cd 28%, #5e88c2 52%, #2464b2 56%, #3f86ca 74%, #6cc0ea);
}
.topbar-left {
  display: flex;
  align-items: center;
  width: 522px;
  margin-left: -18px;
  padding-top: 2px;
}
.top-link {
  display: flex;
  align-items: center;
  gap: 5px;
  margin-right: 20px;
  text-shadow: 1px 1px 1px #123a6c;
}
.user {
  margin-left: -8px;
}
.mono {
  font-family: "Liberation Mono", monospace;
  font-size: 10px;
}
.home-link {
  margin-left: 35px;
  text-decoration: underline;
}
.title {
  margin: 0;
  font-family: "Liberation Serif", "Noto Sans CJK SC", serif;
  font-size: 20px;
  line-height: 34px;
}
.date {
  display: flex;
  align-items: center;
  gap: 5px;
  width: 119px;
  margin-left: auto;
  padding-top: 2px;
  font-size: 11px;
}

/* page */
.page {
  display: flex;
  flex: 1;
  min-height: 0;
}
.sidebar {
  width: 157px;
  margin-left: -20px;
  padding-top: 14px;
  overflow: hidden;
}
.menu {
  padding: 6px;
  margin-bottom: 19px;
  border: 1px solid #c2c2dc;
  border-radius: 6px;
  background-color: #c1cde8;
  box-shadow: inset 0 0 0 1px #f1f1fa;
}
.menu-button {
  display: flex;
  align-items: center;
  justify-content: space-between;
  width: 100%;
  height: 27px;
  padding: 2px 8px 0 3px;
  border: 1px solid #174a7e;
  border-radius: 4px;
  color: #fff;
  text-shadow: 1px 1px 1px #123a6c;
  background:
    radial-gradient(ellipse 70px 20px at 50% 110%, #8fd0f4, transparent),
    radial-gradient(ellipse 60px 12px at 50% 0, #b5dcf0, transparent),
    linear-gradient(#94b4ca, #4f8ab2 46%, #12508a 54%, #1f68a4 75%, #4690c8);
}
.submenu {
  display: flex;
  flex-direction: column;
  gap: 5px;
  margin-top: 3px;
  padding: 9px 0 6px 16px;
  border: 1px solid #86a4d2;
  background-color: #f0eeed;
  color: #2b2f4c;
  letter-spacing: 2px;
}

.scrollbar {
  display: flex;
  flex-direction: column;
  flex: none;
  width: 13px;
  margin-left: 12px;
}
.scroll-arrow {
  width: 13px;
  height: 17px;
}
.scroll-track {
  flex: 1;
}
.scroll-thumb {
  height: 78%;
  background-color: #c3bfc3;
}

.content {
  flex: 1;
  min-width: 0;
  padding-left: 10px;
  overflow: hidden;
}
.content form {
  margin-right: -20px;
}
.caption {
  margin: 0;
  padding: 8px 0 14px;
  color: #222;
}
.form {
  width: 100%;
  border-collapse: collapse;
}
.form th,
.form td {
  padding: 3px;
  border: 1px solid #62c4c8;
}
.form th {
  width: 207px;
  padding: 2px 3px 0;
  color: #222;
  font-weight: normal;
  text-align: left;
}
.form label {
  display: block;
}
.field {
  display: flex;
  align-items: flex-end;
  gap: 4px;
}
.text {
  height: 18px;
  border: 1px solid #222;
  background: none;
}
.text-short {
  width: 148px;
}
.text-long {
  width: 328px;
}
.text-mini {
  width: 100px;
  height: 16px;
}
.select {
  position: relative;
  height: 19px;
}
.select::after {
  content: "▼";
  position: absolute;
  top: 0;
  right: 6px;
  font-family: "DejaVu Sans", sans-serif;
  font-size: 9px;
  line-height: 16px;
  color: #222;
  pointer-events: none;
}
.select select {
  display: block;
  width: 100%;
  height: 19px;
  padding: 2px 0 0 4px;
  appearance: none;
  border: 1px solid #b0aeb2;
  border-radius: 0;
  background: none;
  font-size: 13px;
  line-height: 16px;
}
.select-s {
  width: 51px;
}
.select-m {
  width: 91px;
}
.select-l {
  width: 104px;
}
.btn {
  width: 38px;
  height: 20px;
  padding-top: 1px;
  border: 1px solid #222;
  background-color: #e2dde2;
  color: #66636a;
  line-height: 16px;
}

/* rich text editor */
.editor {
  display: flex;
  flex-direction: column;
  width: 702px;
  height: 204px;
  border: 1px solid #bdbabf;
}
.toolbar {
  padding: 1px 5px 2px;
  border-bottom: 1px solid #bdbabf;
}
.toolbar-row {
  display: flex;
  align-items: center;
  height: 23px;
}
.tool {
  display: flex;
  flex: none;
  align-items: center;
  justify-content: center;
  width: 24px;
  height: 23px;
  color: #222;
}
.tool-sub {
  font-family: "Liberation Sans", sans-serif;
  font-weight: bold;
}
.tool-sub sub,
.tool-sub sup {
  font-size: 8px;
  line-height: 8px;
}
.tool-sub sub {
  padding-top: 8px;
}
.tool-sub sup {
  padding-bottom: 8px;
}
.tool-drop {
  width: 30px;
  gap: 1px;
  font-family: "Liberation Sans", sans-serif;
  font-size: 14px;
}
.tool-drop i {
  font-style: normal;
}
.tool-drop small {
  font-size: 10px;
}
.tool-drop::after {
  content: "";
  border: 3px solid transparent;
  border-top: 3px solid #77757a;
  margin-top: 4px;
}
.tool-font {
  font-family: "DejaVu Sans", serif;
}
.tool-serif {
  font-family: "Liberation Serif", serif;
  font-size: 15px;
  font-weight: bold;
}
.tool-strike {
  font-family: "Liberation Serif", serif;
  font-size: 9px;
}
.blue {
  color: #4470b8;
}
.marker {
  width: 15px;
  line-height: 15px;
  text-align: center;
  background-color: #eac03c;
}
.separator {
  flex: none;
  width: 8px;
  height: 16px;
  background: linear-gradient(#a5a2a8, #a5a2a8) center / 1px 100% no-repeat;
}
.separator-wide {
  width: 10px;
}
.editor-body {
  flex: 1;
  width: 100%;
  border: none;
  outline: none;
  resize: none;
  background: none;
}
.editor-status {
  display: flex;
  align-items: center;
  justify-content: center;
  position: relative;
  height: 12px;
  border-top: 1px solid #bdbabf;
}
.editor-status .i14 {
  height: 10px;
}
.grip {
  position: absolute;
  right: 0;
  bottom: 0;
  width: 9px;
  height: 9px;
}

/* taskbar */
.taskbar {
  display: flex;
  flex: none;
  height: 40px;
  border-top: 1px solid #3c4868;
  background-color: #a8bedc;
}
.task {
  display: flex;
  align-items: center;
  justify-content: center;
}
.task-folder {
  width: 32px;
  margin-left: -24px;
}
.task-player {
  width: 60px;
  margin: 0 3px 0 16px;
}
.task-window {
  width: 60px;
  height: 38px;
  margin-right: 2px;
  border: 1px solid #4c5478;
  border-radius: 3px;
  background: linear-gradient(135deg, #e2e4f2, #c0c4e4 50%, #b4b8dc);
}
.task-current {
  background: linear-gradient(135deg, #f8f8fc, #e0e2f0);
}
.tray {
  display: flex;
  align-items: center;
  gap: 6px;
  margin-left: auto;
  padding: 2px 1px 0 42px;
  background: linear-gradient(90deg, #a8bedc, #8cb4c8 10px, #8789ae 28px);
}
.tray-first {
  margin: -6px 10px 0 0;
}

.pointer {
  position: absolute;
  left: 325px;
  top: 346px;
  width: 12px;
  height: 20px;
}
```
